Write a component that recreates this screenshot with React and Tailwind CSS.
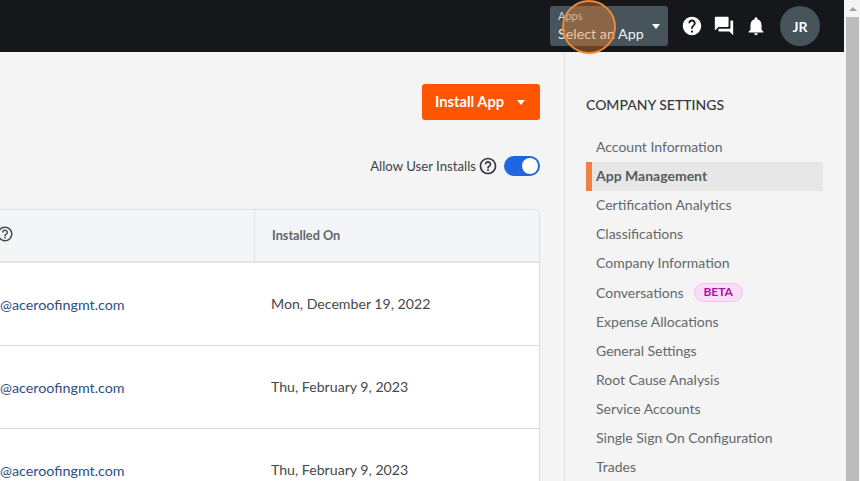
const HELP = "M12 2C6.48 2 2 6.48 2 12s4.48 10 10 10 10-4.48 10-10S17.52 2 12 2zm1 17h-2v-2h2v2zm2.07-7.75l-.9.92C13.45 12.9 13 13.5 13 15h-2v-.5c0-1.1.45-2.1 1.17-2.83l1.24-1.26c.37-.36.59-.86.59-1.41 0-1.1-.9-2-2-2s-2 .9-2 2H8c0-2.21 1.79-4 4-4s4 1.79 4 4c0 .88-.36 1.68-.93 2.25z";
const HELP_OUTLINE = "M11 18h2v-2h-2v2zm1-16C6.48 2 2 6.48 2 12s4.48 10 10 10 10-4.48 10-10S17.52 2 12 2zm0 18c-4.41 0-8-3.59-8-8s3.59-8 8-8 8 3.59 8 8-3.59 8-8 8zm0-14c-2.21 0-4 1.79-4 4h2c0-1.1.9-2 2-2s2 .9 2 2c0 2-3 1.75-3 5h2c0-2.25 3-2.5 3-5 0-2.21-1.79-4-4-4z";
const CHAT = "M21 6h-2v9H6v2c0 .55.45 1 1 1h11l4 4V7c0-.55-.45-1-1-1zm-4 6V3c0-.55-.45-1-1-1H3c-.55 0-1 .45-1 1v14l4-4h10c.55 0 1-.45 1-1z";
const BELL = "M12 22c1.1 0 2-.9 2-2h-4c0 1.1.89 2 2 2zm6-6v-5c0-3.07-1.64-5.64-4.5-6.32V4c0-.83-.67-1.5-1.5-1.5s-1.5.67-1.5 1.5v.68C7.63 5.36 6 7.92 6 11v5l-2 2v1h16v-1l-2-2z";

function Icon({ d, className }) {
  return (
    <svg viewBox="0 0 24 24" className={className} fill="currentColor">
      <path d={d} />
    </svg>
  );
}

function Caret({ className }) {
  return <div className={`w-0 h-0 border-x-[4.5px] border-x-transparent border-t-[5px] ${className}`} />;
}

const rows = [
  { email: "@aceroofingmt.com", date: "Mon, December 19, 2022" },
  { email: "@aceroofingmt.com", date: "Thu, February 9, 2023" },
  { email: "@aceroofingmt.com", date: "Thu, February 9, 2023" },
];

const menu = [
  "Account Information",
  "App Management",
  "Certification Analytics",
  "Classifications",
  "Company Information",
  "Conversations",
  "Expense Allocations",
  "General Settings",
  "Root Cause Analysis",
  "Service Accounts",
  "Single Sign On Configuration",
  "Trades",
];

export default function App() {
  return (
    <div className="relative flex w-[860px] h-[481px] overflow-hidden bg-[#f4f4f4] font-['Lato','Liberation_Sans',sans-serif]">
      <div className="flex flex-col w-[844px] shrink-0">
        {/* Top bar */}
        <div className="flex items-center h-[52px] shrink-0 bg-[#15171b] pl-[550px] text-white">
          <div className="relative w-[118px] h-10 rounded-[3px] bg-[#47545b] pl-2 pt-[3px]">
            <div className="text-[11px] leading-[14px] text-[#cfd4d6]">Apps</div>
            <div className="mt-[1px] text-[14.3px] leading-[19px] text-[#f1f2f3]">Select an App</div>
            <Caret className="absolute right-[8px] top-[18px] border-t-white" />
          </div>
          <Icon d={HELP} className="w-[22px] h-[22px] ml-[13px]" />
          <Icon d={CHAT} className="w-[22px] h-[22px] ml-[10px]" />
          <Icon d={BELL} className="w-[22px] h-[22px] ml-[10px]" />
          <div className="flex items-center justify-center w-10 h-10 ml-[13px] rounded-full bg-[#47545b] text-[14px] font-bold">JR</div>
        </div>

        <div className="flex flex-1 min-h-0">
          {/* Main */}
          <div className="w-[564px] shrink-0 pr-6 pt-8">
            <div className="flex justify-end">
              <div className="flex items-center w-[118px] h-9 rounded-[3px] bg-[#ff5400] pl-[13px] pb-[1px] text-white text-[14.7px] font-bold">
                Install App
                <Caret className="ml-[13px] mt-[2px] border-t-white" />
              </div>
            </div>
            <div className="flex items-center justify-end mt-9 h-5 text-[13.2px] text-[#3d4347]">
              <span className="pt-[2px]">Allow User Installs</span>
              <Icon d={HELP_OUTLINE} className="w-5 h-5 ml-[2px] -mt-[1px] text-[#33383b]" />
              <div className="flex items-center justify-end w-9 h-5 ml-[6px] rounded-full bg-[#2066df] pr-[2px]">
                <div className="w-4 h-4 rounded-full bg-white" />
              </div>
            </div>

            <div className="mt-[33px] border-y border-r border-[#dcdfe1] rounded-tr-[6px] overflow-hidden">
              <div className="flex h-[53px] bg-[#f4f5f7] border-b-2 border-[#e3e5e7]">
                <div className="flex items-center w-[255px] pb-[3px] border-r border-[#e0e2e4]">
                  <Icon d={HELP_OUTLINE} className="w-[18px] h-[18px] -ml-[4px] text-[#454b50]" />
                </div>
                <div className="flex items-center pl-[17px] pt-[1px] text-[12.7px] font-bold text-[#5f666b]">Installed On</div>
              </div>
              {rows.map((r, i) => (
                <div key={i} className="flex h-[83px] bg-white border-b border-[#d8dadc] pt-[32px]">
                  <div className="w-[255px] text-[14.3px] leading-5 text-[#2c4f86]">{r.email}</div>
                  <div className="pl-[16px] -mt-[1px] text-[14.15px] leading-5 text-[#44494d]">{r.date}</div>
                </div>
              ))}
            </div>
          </div>

          {/* Settings menu */}
          <div className="flex-1 min-w-0 border-l border-[#e3e3e3] pl-[21px] pr-[21px] pt-[43px]">
            <div className="text-[14px] leading-5 font-medium text-[#32383c]">COMPANY SETTINGS</div>
            <div className="mt-[18px] flex flex-col">
              {menu.map((m) => {
                const active = m === "App Management";
                return (
                  <div
                    key={m}
                    className={`flex items-center h-[29.1px] shrink-0 pb-[2px] text-[14px] ${active ? "bg-[#e7e7e7] border-l-[6px] border-[#f47f45] pl-1 font-bold text-[#565c60]" : "pl-[10px] text-[#62686c]"}`}
                  >
                    {m}
                    {m === "Conversations" && (
                      <span className="flex items-center justify-center w-[49px] h-[19px] ml-[10px] rounded-full bg-[#fbdcf8] border border-[#f3c4ef] text-[12px] font-bold text-[#a5179d]">BETA</span>
                    )}
                  </div>
                );
              })}
            </div>
          </div>
        </div>
      </div>

      {/* Scrollbar */}
      <div className="flex flex-col flex-1 min-w-0 bg-[#f4f4f4] pl-[2px] pr-[1px]">
        <div className="flex items-center justify-center h-[17px] shrink-0">
          <div className="w-0 h-0 border-x-[4px] border-x-transparent border-b-[4px] border-b-[#a3a3a3]" />
        </div>
        <div className="flex-1 bg-[#bcbcbc]" />
      </div>

      {/* Highlight marker over the app select */}
      <div className="absolute left-[562px] top-0 w-[54px] h-[54px] rounded-full bg-[#f08228]/40 border-2 border-[#e98a3c]" />
    </div>
  );
}
